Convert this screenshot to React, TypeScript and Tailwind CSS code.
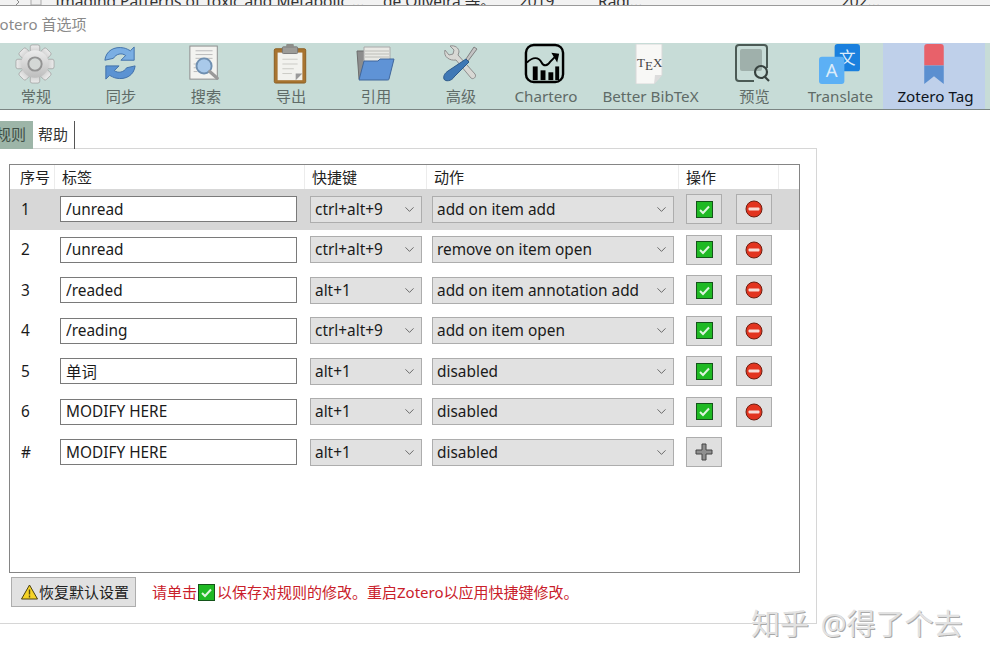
import React from 'react'
import { ChevronDown } from 'lucide-react'

const rows = [
  { no: '1', tag: '/unread', key: 'ctrl+alt+9', action: 'add on item add' },
  { no: '2', tag: '/unread', key: 'ctrl+alt+9', action: 'remove on item open' },
  { no: '3', tag: '/readed', key: 'alt+1', action: 'add on item annotation add' },
  { no: '4', tag: '/reading', key: 'ctrl+alt+9', action: 'add on item open' },
  { no: '5', tag: '单词', key: 'alt+1', action: 'disabled' },
  { no: '6', tag: 'MODIFY HERE', key: 'alt+1', action: 'disabled' },
  { no: '#', tag: 'MODIFY HERE', key: 'alt+1', action: 'disabled' },
]

const GearIcon = () => (
  <svg width="40" height="40" viewBox="0 0 42 42">
    <defs>
      <linearGradient id="gear" x1="0" y1="0" x2="0" y2="1">
        <stop offset="0" stopColor="#ececec" />
        <stop offset="1" stopColor="#bdbdbd" />
      </linearGradient>
    </defs>
    {[0, 45, 90, 135, 180, 225, 270, 315].map((a) => (
      <rect key={a} x="16" y="1" width="10" height="12" rx="2" fill="url(#gear)" stroke="#a0a0a0" strokeWidth="0.8" transform={`rotate(${a} 21 21)`} />
    ))}
    <circle cx="21" cy="21" r="14.5" fill="url(#gear)" />
    <circle cx="21" cy="21" r="7" fill="#d4d8d6" stroke="#939393" strokeWidth="2" />
  </svg>
)

const SyncIcon = () => (
  <svg width="34" height="38" viewBox="0 0 36 40">
    <path d="M2 16C3 6 12 1 22 3c3 .6 5 2 7 3l4-4v14H19l5-5c-4-3-10-2-13 3z" fill="#7aaee3" stroke="#3f6fa8" />
    <path d="M34 22c-1 10-10 15-20 13-3-.6-5-2-7-3l-4 4V22h14l-5 5c4 3 10 2 13-3z" fill="#5b93d3" stroke="#3f6fa8" />
  </svg>
)

const SearchDocIcon = () => (
  <svg width="34" height="38" viewBox="0 0 36 40">
    <rect x="2" y="1" width="29" height="35" fill="#f3f3f0" stroke="#8a8a8a" />
    <path d="M8 6h18M8 10h18M8 14h18M6 28h4M6 24h3M6 20h3" stroke="#b8b8b8" />
    <circle cx="17" cy="22" r="8" fill="#a9c9ea" stroke="#6f8fb0" strokeWidth="2" />
    <path d="M23 28l8 7" stroke="#9a9a9a" strokeWidth="3.5" strokeLinecap="round" />
  </svg>
)

const ClipboardIcon = () => (
  <svg width="36" height="40" viewBox="0 0 36 42">
    <rect x="1.5" y="5" width="33" height="36" rx="1.5" fill="#a87430" stroke="#8a5c20" />
    <rect x="5" y="9" width="26" height="29" fill="#f2f2ee" />
    <path d="M10 16h16M10 21h16M10 26h12M10 31h10" stroke="#c9c9c4" />
    <path d="M24 38l7-7h-7z" fill="#9a9a9a" />
    <rect x="10" y="3" width="16" height="7" rx="1" fill="#9c9c98" stroke="#777" />
    <rect x="14" y="0" width="8" height="4" rx="1" fill="#8d8d89" />
  </svg>
)

const FolderIcon = () => (
  <svg width="40" height="36" viewBox="0 0 40 36">
    <path d="M2 5h7l2-2v30H4z" fill="#8d8d8d" stroke="#6d6d6d" />
    <path d="M9 1h26v18H9z" fill="#e9e9e5" stroke="#aaa" />
    <path d="M10 5h24M10 8h24M10 11h24" stroke="#bdbdb8" />
    <path d="M9 15h14l2-2h14l-5 20c0 1-1 1-2 1H4z" fill="#5f93d6" stroke="#41679b" />
  </svg>
)

const ToolsIcon = () => (
  <svg width="36" height="38" viewBox="0 0 36 38">
    <path d="M3 5l4 5 4-1 1-4-4-4c5-1 9 2 9 6l-1 3 17 19c2 3-2 6-4 4L14 15c-6 1-13-3-11-10z" fill="#d8d8d4" stroke="#8f8f8f" />
    <path d="M32 2l3 2-9 12-2-2z" fill="#c4c4c4" stroke="#808080" />
    <path d="M24 14l3 3-15 15c-2 4-9 5-10 2-1-3 1-6 4-8z" fill="#3f78b5" stroke="#2e5a8a" />
  </svg>
)

const CharteroIcon = () => (
  <svg width="41" height="41" viewBox="0 0 42 42">
    <rect x="2" y="2" width="38" height="38" rx="8" fill="none" stroke="#000" strokeWidth="2.5" />
    <path d="M3 20c6-6 12-6 15 0 2 4 6 4 9-1l5-5" fill="none" stroke="#000" strokeWidth="2" />
    <path d="M28 10l8 1-2 9z" fill="#000" />
    <rect x="9" y="24" width="5" height="14" fill="#000" />
    <rect x="17" y="28" width="5" height="10" fill="#000" />
    <rect x="25" y="30" width="5" height="8" fill="#000" />
    <rect x="32" y="24" width="4" height="14" fill="#000" />
  </svg>
)

const TexIcon = () => (
  <svg width="28" height="40" viewBox="0 0 28 40">
    <path d="M1 0h26v31l-8 9H1z" fill="#f8f8f6" stroke="#d8d8d8" />
    <path d="M19 40l1-9h7z" fill="#dcdcdc" />
    <text x="2" y="23" fontFamily="'Liberation Serif', serif" fontSize="13" fill="#444">
      T<tspan dy="3">E</tspan><tspan dy="-3">X</tspan>
    </text>
  </svg>
)

const PreviewIcon = () => (
  <svg width="38" height="40" viewBox="0 0 38 40">
    <path d="M33 24V4a3 3 0 0 0-3-3H5a3 3 0 0 0-3 3v30a3 3 0 0 0 3 3h15" fill="none" stroke="#4b5a55" strokeWidth="2" />
    <rect x="6" y="5" width="22" height="22" rx="2" fill="#9fb0ab" />
    <circle cx="27" cy="28" r="6" fill="none" stroke="#37423f" strokeWidth="2.2" />
    <path d="M31 33l4 4" stroke="#37423f" strokeWidth="2.2" />
  </svg>
)

const TranslateIcon = () => (
  <svg width="41" height="40" viewBox="0 0 42 41">
    <rect x="16" y="0" width="26" height="28" rx="3" fill="#1a80de" />
    <text x="29" y="20" textAnchor="middle" fontFamily="'Noto Sans CJK SC', sans-serif" fontSize="17" fill="#dcecfa">文</text>
    <rect x="0" y="13" width="26" height="28" rx="3" fill="#5cb0f5" />
    <text x="13" y="34" textAnchor="middle" fontFamily="'Noto Sans', sans-serif" fontSize="19" fill="#dcecfa">A</text>
  </svg>
)

const BookmarkIcon = () => (
  <svg width="20" height="40" viewBox="0 0 20 41">
    <path d="M0 3a3 3 0 0 1 3-3h14a3 3 0 0 1 3 3v19H0z" fill="#e8616a" />
    <path d="M0 22h20v19l-10-8-10 8z" fill="#5b8fd0" />
  </svg>
)

const CheckIcon = () => (
  <svg width="17" height="17" viewBox="0 0 17 17">
    <rect x="0.5" y="0.5" width="16" height="16" fill="#1fb924" stroke="#14541a" />
    <path d="M4 9l3 3 6-6.5" fill="none" stroke="#dff5df" strokeWidth="2" />
  </svg>
)

const MinusIcon = () => (
  <svg width="18" height="18" viewBox="0 0 18 18">
    <circle cx="9" cy="9" r="8" fill="#e2341f" stroke="#6e1f12" />
    <rect x="3.5" y="7.5" width="11" height="3" rx="1" fill="#f6dcd6" />
  </svg>
)

const PlusIcon = () => (
  <svg width="18" height="18" viewBox="0 0 18 18">
    <path d="M7 1h4v6h6v4h-6v6H7v-6H1V7h6z" fill="#8f8f8f" stroke="#444" />
  </svg>
)

const WarnIcon = () => (
  <svg width="17" height="16" viewBox="0 0 17 16">
    <path d="M8.5 1L16.5 15H.5z" fill="#f5d327" stroke="#4a3f10" />
    <path d="M8.5 5.5v5M8.5 11.5v2" stroke="#5a4a10" strokeWidth="1.4" />
  </svg>
)

const tools = [
  { label: '常规', icon: <GearIcon />, w: 'w-[85px]' },
  { label: '同步', icon: <SyncIcon />, w: 'w-[85px]' },
  { label: '搜索', icon: <SearchDocIcon />, w: 'w-[85px]' },
  { label: '导出', icon: <ClipboardIcon />, w: 'w-[85px]' },
  { label: '引用', icon: <FolderIcon />, w: 'w-[85px]' },
  { label: '高级', icon: <ToolsIcon />, w: 'w-[85px]' },
  { label: 'Chartero', icon: <CharteroIcon />, w: 'w-[85px]' },
  { label: 'Better BibTeX', icon: <TexIcon />, w: 'w-[124px]' },
  { label: '预览', icon: <PreviewIcon />, w: 'w-[84px]' },
  { label: 'Translate', icon: <TranslateIcon />, w: 'w-[88px]' },
]

const ToolItem = ({ label, icon, w }: { label: string; icon: React.ReactNode; w: string }) => (
  <div className={`${w} shrink-0 flex flex-col items-center`}>
    <div className="h-[41px] flex items-center justify-center">{icon}</div>
    <div className="mt-[2px] pl-[3px] text-[15.2px] leading-[20px] text-[#5f6b67] whitespace-nowrap">{label}</div>
  </div>
)

const Select = ({ value, w }: { value: string; w: string }) => (
  <div className={`${w} h-[27px] shrink-0 flex items-center justify-between pl-[4px] pr-[4px] bg-[#e1e1e1] border border-[#adadad] text-[15.4px] text-[#1a1a1a] whitespace-nowrap`}>
    <span>{value}</span>
    <ChevronDown size={15} strokeWidth={1} className="text-[#222]" />
  </div>
)

const IconButton = ({ children, className }: { children: React.ReactNode; className: string }) => (
  <div className={`w-[36px] h-[30px] shrink-0 flex items-center justify-center bg-[#dfdfdf] border border-[#adadad] ${className}`}>
    {children}
  </div>
)

export default function App() {
  return (
    <div className="relative w-[990px] h-[665px] overflow-hidden bg-white text-[#1a1a1a] font-['Noto_Sans','Noto_Sans_CJK_SC',sans-serif]">
      {/* window behind, only its last pixels show */}
      <div className="h-[6px] overflow-hidden bg-[#f2f2f2] border-b border-[#9a9a9a] flex items-end text-[15.5px] text-[#333] whitespace-nowrap">
        <div className="flex h-[6px] items-end leading-[16px] -mb-[4px]">
          <svg width="30" height="6" viewBox="0 0 30 6" className="ml-[13px] shrink-0 mb-[4px]">
            <path d="M3 0l3 3-3 3" fill="none" stroke="#888" />
            <rect x="18" y="0" width="10" height="6" fill="#eee" stroke="#aaa" />
          </svg>
          <span className="ml-[12px] w-[328px]">Imaging Patterns of Toxic and Metabolic ...</span>
          <span className="w-[136px]">de Oliveira 等。</span>
          <span className="w-[79px]">2019</span>
          <span className="w-[243px]">Radi...</span>
          <span>202...</span>
        </div>
      </div>

      <div className="h-[37px] flex items-center overflow-hidden whitespace-nowrap text-[15px] text-[#8a8a8a]">
        <span className="-ml-[9px]">Zotero 首选项</span>
      </div>

      <div className="h-[67px] flex bg-[#c7dcd7] border-b border-[#7b8583] overflow-hidden">
        <div className="flex -ml-[8px]">
          {tools.map((t) => (
            <ToolItem key={t.label} {...t} />
          ))}
          <div className="w-[102px] shrink-0 flex flex-col items-center bg-[#bfd0ea]">
            <div className="h-[41px] flex items-center justify-center"><BookmarkIcon /></div>
            <div className="mt-[2px] pl-[3px] text-[15.2px] leading-[20px] text-[#0d1420] whitespace-nowrap">Zotero Tag</div>
          </div>
        </div>
      </div>

      <div className="mt-[11px] h-[28px] flex text-[15px] leading-[26px]">
        <div className="w-[33px] bg-[#9db5a8] text-[#3f4f46] overflow-hidden whitespace-nowrap">
          <span className="-ml-[4px] block">规则</span>
        </div>
        <div className="w-[42px] pl-[5px] border-r border-[#555] text-[#333]">帮助</div>
      </div>

      <div className="w-[817px] h-[476px] -mt-[1px] pl-[9px] pt-[15px] border-t border-r border-b border-[#d6d6d6]">
        <div className="w-[791px] h-[409px] border border-[#858585] bg-white">
          <div className="h-[24px] flex text-[15px] leading-[24px] text-[#222]">
            <div className="w-[45px] pl-[10px] border-r border-[#ececec]">序号</div>
            <div className="w-[250px] pl-[7px] border-r border-[#ececec]">标签</div>
            <div className="w-[122px] pl-[7px] border-r border-[#ececec]">快捷键</div>
            <div className="w-[252px] pl-[7px] border-r border-[#ececec]">动作</div>
            <div className="w-[100px] pl-[7px] border-r border-[#ececec]">操作</div>
          </div>
          {rows.map((r, i) => (
            <div key={r.no} className={`h-[40.5px] flex items-center ${i === 0 ? 'bg-[#d7d7d7]' : ''}`}>
              <div className="w-[50px] shrink-0 pl-[11px] text-[15.4px]">{r.no}</div>
              <input
                readOnly
                value={r.tag}
                className="w-[237px] h-[26px] shrink-0 px-[5px] bg-white border border-[#7a7a7a] text-[15.4px] text-[#1a1a1a] outline-none"
              />
              <div className="ml-[13px]"><Select value={r.key} w="w-[112px]" /></div>
              <div className="ml-[10px]"><Select value={r.action} w="w-[242px]" /></div>
              <IconButton className="ml-[12px]">{r.no === '#' ? <PlusIcon /> : <CheckIcon />}</IconButton>
              {r.no !== '#' && <IconButton className="ml-[14px]"><MinusIcon /></IconButton>}
            </div>
          ))}
        </div>

        <div className="mt-[4px] ml-[2px] flex items-center">
          <div className="w-[125px] h-[30px] flex items-center pl-[9px] gap-[1px] bg-[#e1e1e1] border border-[#adadad] text-[15px] text-[#222] whitespace-nowrap">
            <WarnIcon />
            <span>恢复默认设置</span>
          </div>
          <div className="ml-[16px] flex items-center text-[15px] text-[#c9202a] whitespace-nowrap">
            <span>请单击</span>
            <span className="mx-[1px]"><CheckIcon /></span>
            <span className="pl-[1px]">以保存对规则的修改。重启Zotero以应用快捷键修改。</span>
          </div>
        </div>
      </div>

      {/* zhihu watermark */}
      <div className="absolute left-[751px] top-[605px] text-[29px] leading-[38px] text-[#e2e2e2] whitespace-nowrap [text-shadow:1px_1px_0_#a8a8a8] [word-spacing:4px]">
        知乎 @得了个去
      </div>
    </div>
  )
}
